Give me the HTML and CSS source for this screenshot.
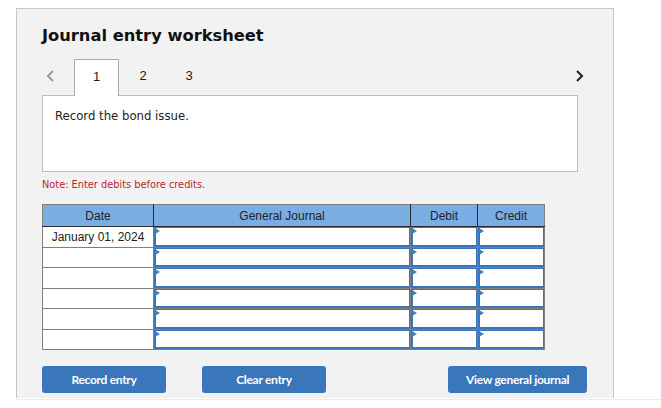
FILE: index.html
```html
<!DOCTYPE html>
<html>
<head>
<meta charset="utf-8">
<link rel="stylesheet" href="styles.css">
</head>
<body>
<div class="panel">
  <h1 class="title">Journal entry worksheet</h1>
  <div class="tabs">
    <span class="arrow arrow-left"><svg width="10" height="12" viewBox="0 0 10 12"><path d="M8 1 L3 6 L8 11" fill="none" stroke="#9a9a9a" stroke-width="2"/></svg></span>
    <span class="tab active">1</span>
    <span class="tab">2</span>
    <span class="tab">3</span>
    <span class="spacer"></span>
    <span class="arrow arrow-right"><svg width="10" height="12" viewBox="0 0 10 12"><path d="M2 1 L7 6 L2 11" fill="none" stroke="#222" stroke-width="2"/></svg></span>
  </div>
  <div class="prompt">Record the bond issue.</div>
  <p class="note">Note: Enter debits before credits.</p>
  <table class="journal">
    <thead>
      <tr><th class="c-date">Date</th><th class="c-gj">General Journal</th><th class="c-amt">Debit</th><th class="c-amt">Credit</th></tr>
    </thead>
    <tbody>
      <tr><td class="date">January 01, 2024</td><td class="in"><div></div></td><td class="in"><div></div></td><td class="in"><div></div></td></tr>
      <tr><td class="date"></td><td class="in"><div></div></td><td class="in"><div></div></td><td class="in"><div></div></td></tr>
      <tr><td class="date"></td><td class="in"><div></div></td><td class="in"><div></div></td><td class="in"><div></div></td></tr>
      <tr><td class="date"></td><td class="in"><div></div></td><td class="in"><div></div></td><td class="in"><div></div></td></tr>
      <tr><td class="date"></td><td class="in"><div></div></td><td class="in"><div></div></td><td class="in"><div></div></td></tr>
      <tr><td class="date"></td><td class="in"><div></div></td><td class="in"><div></div></td><td class="in"><div></div></td></tr>
    </tbody>
  </table>
  <div class="buttons">
    <button class="btn">Record entry</button>
    <button class="btn">Clear entry</button>
    <span class="spacer"></span>
    <button class="btn">View general journal</button>
  </div>
</div>
<div class="rule"></div>
</body>
</html>
```
FILE: styles.css
```css
html, body {
  margin: 0;
  padding: 0;
  background: #fff;
}
body {
  padding: 8px 0 0 16px;
}
.panel {
  width: 598px;
  height: 390px;
  box-sizing: border-box;
  border: 1px solid #c6c6c6;
  border-bottom: none;
  background: #f2f2f2;
  padding: 17px 35px 0 25px;
  font-family: "DejaVu Sans", Verdana, sans-serif;
}
.title {
  margin: 0;
  font-size: 16.3px;
  line-height: 20px;
  font-weight: bold;
  color: #111;
}
.tabs {
  display: flex;
  align-items: stretch;
  margin-top: 13px;
  margin-right: -7px;
  height: 36px;
  font-family: "Liberation Sans", Arial, sans-serif;
  font-size: 13px;
  color: #222;
}
.arrow {
  display: flex;
  align-items: center;
  padding-bottom: 3px;
}
.arrow-left {
  width: 32px;
  padding-left: 3px;
  box-sizing: border-box;
}
.spacer { flex: 1; }
.tab {
  width: 46px;
  display: flex;
  justify-content: center;
  align-items: center;
  padding-bottom: 3px;
  box-sizing: border-box;
}
.tab.active {
  width: 45px;
  margin-right: 1px;
  background: #fff;
  border: 1px solid #aaa;
  border-bottom: none;
  position: relative;
  z-index: 1;
  height: 37px;
}
.prompt {
  height: 77px;
  box-sizing: border-box;
  background: #fff;
  border: 1px solid #bdbdbd;
  padding: 13px 12px;
  font-size: 11.7px;
  color: #222;
}
.note {
  margin: 7px 0 0 0;
  font-size: 9.8px;
  line-height: 12px;
  color: #b8262b;
}
.journal {
  margin-top: 13px;
  border-collapse: collapse;
  width: 502px;
  font-family: "Liberation Sans", Arial, sans-serif;
  font-size: 12px;
  color: #222;
  table-layout: fixed;
}
.journal th {
  background: #7aade3;
  font-weight: normal;
  height: 21px;
  padding: 0;
  border: 1px solid #2b2b2b;
  border-top-color: #7f7f7f;
}
.journal th:first-child { border-left-color: #7f7f7f; }
.journal th:last-child { border-right-color: #7f7f7f; }
.c-date { width: 110px; }
.c-gj { width: 256px; }
.c-amt { width: 66px; }
.journal td {
  border: 1px solid #7f7f7f;
  height: 19.5px;
  padding: 0;
}
.journal thead th { border-bottom-color: #2b2b2b; }
.journal td.date {
  text-align: center;
  background: #fff;
}
.journal td.in {
  position: relative;
  background: #fff;
}
.journal td.in > div {
  position: absolute;
  inset: 0;
  border: 2px solid #3b74b8;
  border-right-width: 1px;
  border-top-width: 1px;
}
.journal td.in > div::before {
  content: "";
  position: absolute;
  left: -1px;
  top: 0;
  border-left: 5px solid #3d7fcb;
  border-top: 3px solid transparent;
  border-bottom: 3px solid transparent;
}
.buttons {
  display: flex;
  margin-top: 16px;
  margin-right: -9px;
}
.btn {
  width: 124px;
  height: 27px;
  margin-right: 36px;
  border: none;
  border-radius: 3px;
  background: #3a76ba;
  color: #fff;
  font-family: Lato, "Liberation Sans", sans-serif;
  font-weight: bold;
  font-size: 12px;
  letter-spacing: -0.3px;
  padding: 0;
}
.buttons .btn:last-child {
  width: 139px;
  margin-right: 0;
}
.rule {
  height: 1px;
  margin-top: 1px;
  background: #ececec;
}
```
